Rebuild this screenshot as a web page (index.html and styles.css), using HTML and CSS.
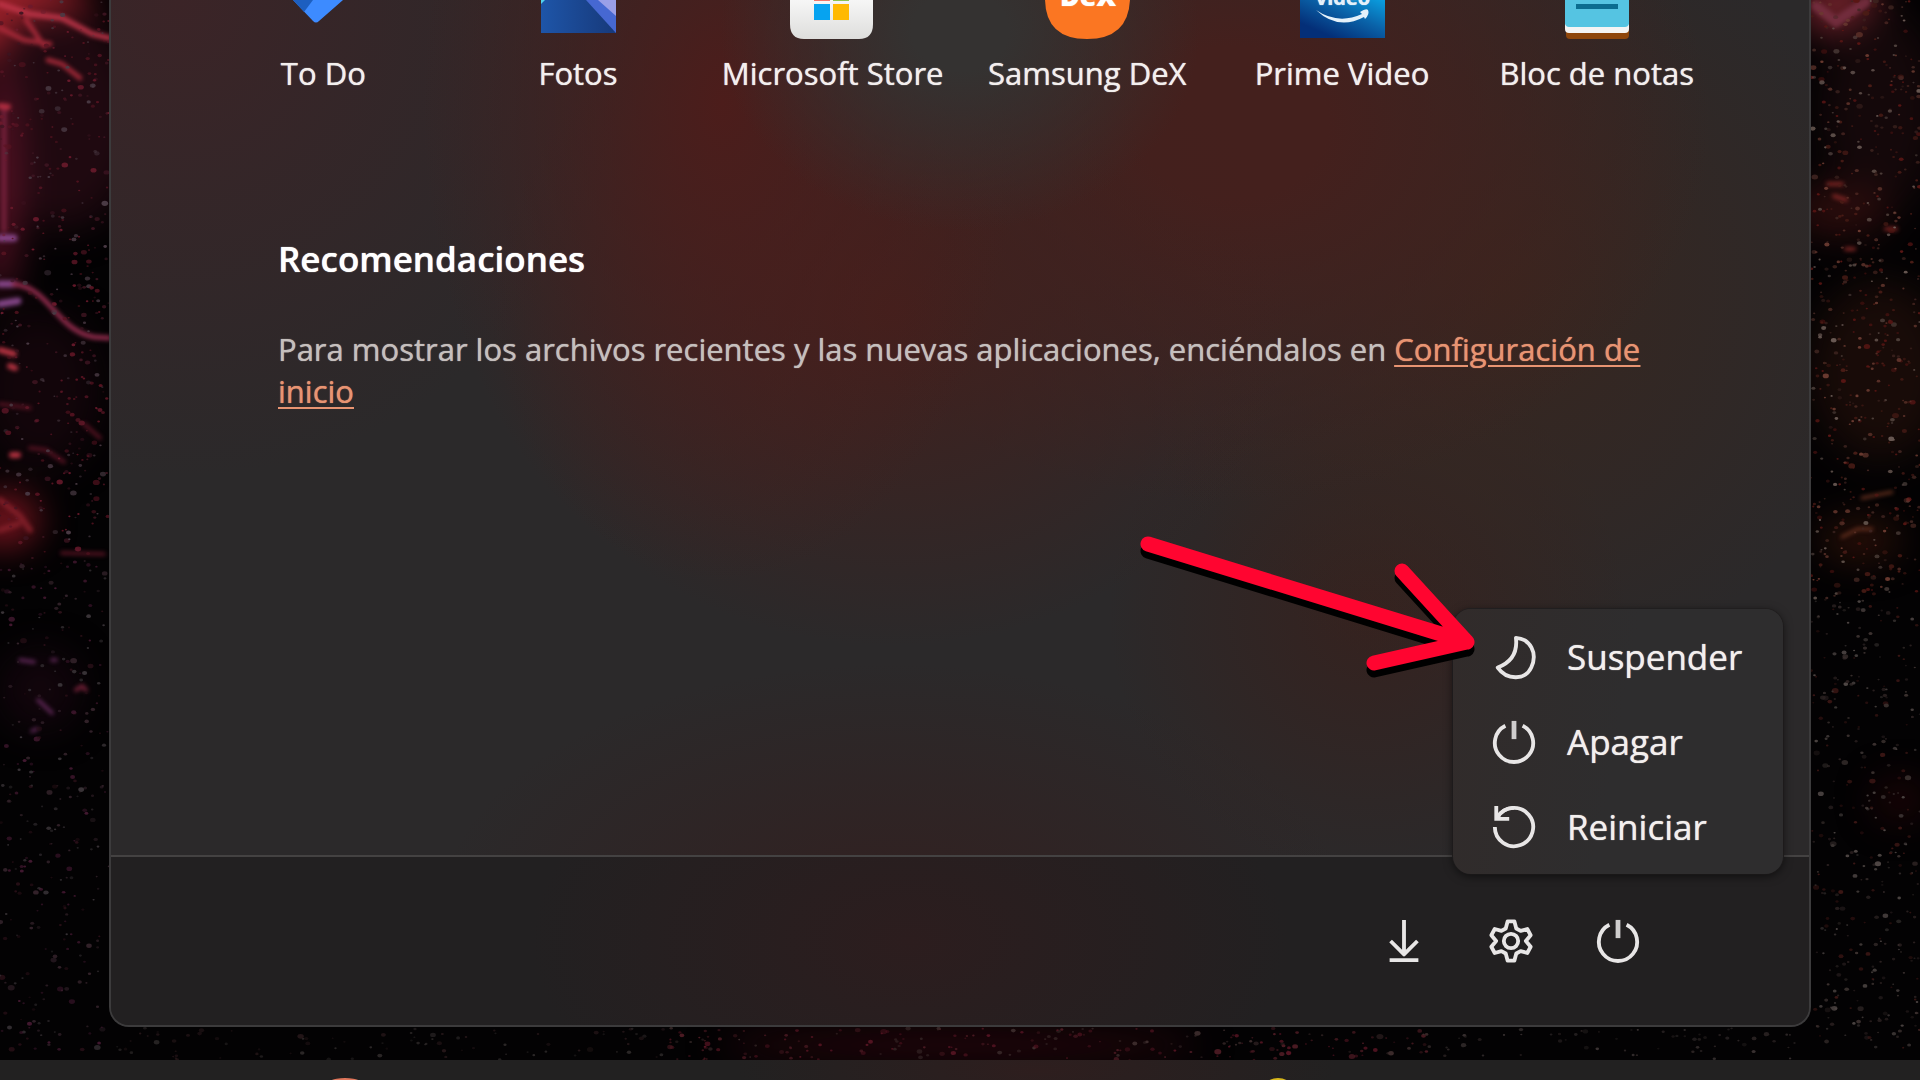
FILE: index.html
```html
<!DOCTYPE html>
<html lang="es">
<head>
<meta charset="utf-8">
<title>Inicio</title>
<link rel="stylesheet" href="styles.css">
</head>
<body>
<svg class="wallpaper" id="wallpaper" viewBox="0 0 1920 1080" preserveAspectRatio="xMidYMid slice" aria-hidden="true">
  <defs>
    <filter id="soft" color-interpolation-filters="sRGB" x="-50%" y="-50%" width="200%" height="200%"><feGaussianBlur stdDeviation="18"/></filter>
    <filter id="fine" color-interpolation-filters="sRGB" x="-50%" y="-50%" width="200%" height="200%"><feGaussianBlur stdDeviation="2"/></filter>
  </defs>
  <rect width="1920" height="1080" fill="#030203"/>
  <g filter="url(#soft)">
    <ellipse cx="10" cy="15" rx="80" ry="50" fill="#9a2029"/>
    <ellipse cx="60" cy="120" rx="80" ry="110" fill="#1f0910"/>
    <ellipse cx="0" cy="180" rx="18" ry="120" fill="#5c1226"/>
    <ellipse cx="40" cy="390" rx="60" ry="80" fill="#12050a"/>
    <ellipse cx="4" cy="520" rx="34" ry="26" fill="#7d1520"/>
    <ellipse cx="40" cy="690" rx="40" ry="40" fill="#12050c"/>
    <ellipse cx="1840" cy="5" rx="40" ry="30" fill="#74232c"/>
    <ellipse cx="1880" cy="110" rx="60" ry="100" fill="#14080a"/>
    <ellipse cx="1840" cy="210" rx="50" ry="26" fill="#2c0d0d"/>
    <ellipse cx="1880" cy="370" rx="70" ry="90" fill="#180b08"/>
    <ellipse cx="1860" cy="540" rx="40" ry="20" fill="#2a1008"/>
    <ellipse cx="1900" cy="800" rx="26" ry="20" fill="#1c0406"/>
    <ellipse cx="960" cy="1045" rx="240" ry="16" fill="#24060b"/>
  </g>
  <g filter="url(#fine)" fill="none" stroke-linecap="round" opacity=".85">
    <path d="M0 4 30 14 62 18 92 34 109 38" stroke="#c2364a" stroke-width="6"/>
    <path d="M0 28 24 40 50 44M48 60 62 64 80 78M26 20 44 46" stroke="#b02c3c" stroke-width="5"/>
    <path d="M4 106V230" stroke="#7c2440" stroke-width="5"/>
    <path d="M0 106 8 107" stroke="#c83448" stroke-width="6"/>
    <path d="M0 238H14M0 284H14M0 304 18 301" stroke="#96509c" stroke-width="7"/>
    <path d="M14 284C50 288 56 330 94 337L109 338" stroke="#a33156" stroke-width="5"/>
    <path d="M84 424 100 438M0 404 30 408M30 448 46 450 64 462M62 553 104 554" stroke="#5c1424" stroke-width="4"/>
    <path d="M0 350 14 354M10 366 15 368M12 455H18" stroke="#d03a4a" stroke-width="6"/>
    <path d="M0 500 20 516 30 530M0 530 18 524" stroke="#86202a" stroke-width="6"/>
    <path d="M20 660 34 662M52 660H56M38 700 52 713M32 731 37 729" stroke="#642a5c" stroke-width="4"/>
    <path d="M76 690 82 686 86 690" stroke="#80243e" stroke-width="4"/>
    <path d="M1828 184H1842M1834 196 1846 200M1886 229H1896M1846 249H1854" stroke="#8c2a28" stroke-width="4"/>
    <path d="M1842 537 1858 529 1872 529M1862 498 1892 492" stroke="#7a3a24" stroke-width="3"/>
    <path d="M1816 6 1836 22 1866 2" stroke="#783042" stroke-width="10"/>
  </g>
  <g id="dust"></g>
</svg>

<main class="desktop">
  <section class="start" aria-label="Inicio">
    <div class="start__body">
      <ul class="apps">
        <li><a class="app" href="#todo">
          <svg class="app__icon" viewBox="0 0 96 39" aria-hidden="true">
            <path d="M18 0H68L44 21Q41 24 38 21L18 0Z" fill="#3d8bff"/>
            <path d="M18 0H36L29 8 20 0Z" fill="#1959b8"/><path d="M18 0 29 12 38 0Z" fill="#1d5fc0"/>
          </svg><span>To Do</span></a></li>
        <li><a class="app" href="#fotos">
          <svg class="app__icon" viewBox="0 0 96 39" aria-hidden="true">
            <defs><linearGradient id="photo" x2="1"><stop stop-color="#1e55a8"/><stop offset="1" stop-color="#17397a"/></linearGradient></defs>
            <path d="M11 0H86V33H11Z" fill="url(#photo)"/>
            <path d="M56 0H86V33Z" fill="#4668d2"/><path d="M68 0H86V16Z" fill="#9a9fe8"/><path d="M11 0H15L11 4Z" fill="#52d3ee"/>
          </svg><span>Fotos</span></a></li>
        <li><a class="app" href="#store">
          <svg class="app__icon" viewBox="0 0 96 39" aria-hidden="true">
            <defs><linearGradient id="bag" x2="0" y2="1"><stop stop-color="#f6f6f6"/><stop offset="1" stop-color="#dededc"/></linearGradient></defs>
            <path d="M5 0H88V24Q88 39 74 39H19Q5 39 5 24Z" fill="url(#bag)"/>
            <path d="M29 0H45V1H29Z" fill="#f0756a"/><path d="M48 0H64V1H48Z" fill="#8cc152"/>
            <path d="M29 4H45V20H29Z" fill="#06a3f0"/><path d="M48 4H64V20H48Z" fill="#ffb902"/>
          </svg><span>Microsoft Store</span></a></li>
        <li><a class="app" href="#dex">
          <svg class="app__icon" viewBox="0 0 96 39" aria-hidden="true">
            <path d="M6 0H91Q89 39 48 39T6 0Z" fill="#fb7622"/>
            <text x="49" y="6" text-anchor="middle" class="logo-dex">DeX</text>
          </svg><span>Samsung DeX</span></a></li>
        <li><a class="app" href="#prime">
          <svg class="app__icon" viewBox="0 0 96 39" aria-hidden="true">
            <defs><linearGradient id="prime" x1="0" y1="1" x2="1" y2="0"><stop offset=".2" stop-color="#042f78"/><stop offset=".6" stop-color="#0a62a8"/><stop offset="1" stop-color="#0a9fe0"/></linearGradient></defs>
            <path d="M6 0H91V38H6Z" fill="url(#prime)"/>
            <text x="49" y="5" text-anchor="middle" class="logo-video">video</text>
            <path d="M22 10Q44 25 68 14L66 12Q72 8 74 10 76 14 71 19L70 17Q44 31 22 10Z" fill="#e4f1fa"/>
          </svg><span>Prime Video</span></a></li>
        <li><a class="app" href="#notas">
          <svg class="app__icon" viewBox="0 0 96 39" aria-hidden="true">
            <path d="M17 28H80V35Q80 39 76 39H21Q17 39 17 35Z" fill="#8e460c"/>
            <path d="M16 22H80V29Q80 33 76 33H20Q16 33 16 29Z" fill="#f4f4f4"/>
            <path d="M16 0H80V24Q79 27 76 27H20Q17 27 16 24Z" fill="#55c4e2"/>
            <path d="M27 4H69V9H27Z" fill="#0b6d90"/>
          </svg><span>Bloc de notas</span></a></li>
      </ul>
      <div class="recommended">
        <h2>Recomendaciones</h2>
        <p>Para mostrar los archivos recientes y las nuevas aplicaciones, enciéndalos en <a href="#configuracion">Configuración de inicio</a></p>
      </div>
    </div>

    <footer class="actions">
      <button type="button" aria-label="Descargas">
        <svg viewBox="0 0 48 48"><path d="M24 2V38M10 24 24 38 38 24M9 44H39" stroke-linejoin="round"/></svg>
      </button>
      <button type="button" aria-label="Configuración">
        <svg viewBox="0 0 48 48"><path d="M20.500 3.500H27.500L29.500 11 34 13.500 41 11.500 44.500 18 39.500 24 44.500 30 41 36.500 34 34.500 29.500 37 27.500 44.500H20.500L18.500 37 14 34.500 7 36.500 3.500 30 8.500 24 3.500 18 7 11.500 14 13.500 18.500 11Z" stroke-linejoin="round"/><circle cx="24" cy="24" r="7.500"/></svg>
      </button>
      <button type="button" aria-label="Inicio/Apagado">
        <svg viewBox="0 0 48 48"><path d="M15 7A20 20 0 1 0 33 7"/><path d="M24 2V21" class="bar"/></svg>
      </button>
    </footer>

    <div class="power-menu" role="menu">
      <button type="button" role="menuitem">
        <svg viewBox="0 0 48 48"><path d="M26 4C28 20 20 30 7 35 17 49 36 48 42 35 49 20 41 5 26 4Z" stroke-linejoin="round"/></svg>Suspender
      </button>
      <button type="button" role="menuitem">
        <svg viewBox="0 0 48 48"><path d="M15 7A20 20 0 1 0 33 7"/><path d="M24 2V21" class="bar"/></svg>Apagar
      </button>
      <button type="button" role="menuitem">
        <svg viewBox="0 0 48 48"><path d="M4 24A20 20 0 1 0 6.700 14"/><path d="M6.700 14A20 20 0 0 1 24 4"/><path d="M5.500 2V15.500H19"/></svg>Reiniciar
      </button>
    </div>

    <svg class="pointer" viewBox="0 0 340 150" aria-hidden="true">
      <g stroke="#000"><path d="M8 21 327 119M262 48 327 119 234 140"/></g>
      <g stroke="#ff0530"><path d="M8 14 327 112M262 41 327 112 234 133"/></g>
    </svg>
  </section>
</main>

<nav class="taskbar" aria-label="Barra de tareas">
  <svg viewBox="0 0 1920 20" preserveAspectRatio="none" aria-hidden="true">
    <ellipse cx="345" cy="28" rx="22" ry="10" fill="#e0775c"/>
    <ellipse cx="1278" cy="28" rx="14" ry="10" fill="#d8b81c"/>
  </svg>
</nav>
<script src="wallpaper.js"></script>
</body>
</html>
```
FILE: styles.css
```css
* { box-sizing: border-box; }

body {
  margin: 0;
  min-height: 100vh;
  display: flex;
  flex-direction: column;
  overflow: hidden;
  background: #030203;
  color: #f3efee;
  font-family: "Open Sans", "Noto Sans", sans-serif;
  font-size: 31px;
  line-height: 42px;
  text-shadow: 0 0 1px currentColor;
}

.wallpaper {
  position: absolute;
  inset: 0;
  width: 100%;
  height: 100%;
}

.desktop {
  position: relative;
  flex: 1;
  display: flex;
  padding: 0 109px 33px;
}

.start {
  position: relative;
  flex: 1;
  display: flex;
  flex-direction: column;
  border: 2px solid #3c3b3c;
  border-top: 0;
  border-radius: 0 0 20px 20px;
  overflow: hidden;
  background:
    radial-gradient(ellipse 240px 200px at 50% 3%, #343231 20%, transparent),
    radial-gradient(ellipse 300px 480px at 36% 10%, #4c1d1b, transparent),
    radial-gradient(ellipse 400px 340px at 46% 30%, #42201d, transparent),
    radial-gradient(ellipse 480px 380px at 66% 12%, #44201d 20%, transparent),
    radial-gradient(ellipse 380px 400px at 82% 28%, #38261f, transparent),
    radial-gradient(ellipse 460px 480px at 4% 0%, #3b2427, transparent),
    radial-gradient(ellipse 260px 260px at 74% 60%, #35221f, transparent),
    radial-gradient(ellipse 460px 260px at 46% 90%, #322020, transparent),
    #2b292a;
}

.start__body { flex: 1; }

.apps {
  display: grid;
  grid-template-columns: repeat(6, 1fr);
  margin: 0;
  padding: 0 85px;
  list-style: none;
}

.app {
  display: flex;
  flex-direction: column;
  align-items: center;
  gap: 13px;
  color: inherit;
  text-decoration: none;
  white-space: nowrap;
}

.app__icon {
  width: 96px;
  height: 39px;
}

.logo-dex {
  fill: #fff;
  font: 800 27px "Open Sans", sans-serif;
}

.logo-video {
  fill: #e4f1fa;
  font: 700 20px "Open Sans", sans-serif;
}

.recommended { padding: 144px 160px 0 167px; }

.recommended h2 {
  margin: 0 0 48px;
  font-size: 35px;
  font-weight: 600;
  line-height: 42px;
  color: #fff;
}

.recommended p {
  margin: 0;
  color: #c5bfbd;
}

.recommended a {
  color: #e89472;
  text-decoration-thickness: 2px;
  text-underline-offset: 4px;
}

.actions {
  display: flex;
  justify-content: flex-end;
  align-items: center;
  gap: 50px;
  height: 170px;
  padding-right: 163px;
  border-top: 2px solid #444242;
  background:
    radial-gradient(ellipse 380px 220px at 47% 50%, #2c1d1e, transparent),
    #222021;
}

button {
  border: 0;
  background: none;
  color: inherit;
  font: inherit;
  text-shadow: inherit;
}

button svg {
  flex: none;
  width: 46px;
  height: 46px;
  fill: none;
  stroke: #e8e6e6;
  stroke-width: 4px;
}

button .bar { stroke-width: 5px; stroke: #cfcdcd; }

.actions button {
  display: flex;
  justify-content: center;
  width: 57px;
  padding: 0;
}

.power-menu {
  position: absolute;
  right: 26px;
  bottom: 151px;
  width: 330px;
  padding: 5px 0;
  border-radius: 18px;
  background: linear-gradient(100deg, #312b2a, #2e2d2e 50%);
  box-shadow: 0 2px 10px #0009, 0 0 0 1px #282526;
}

.power-menu button {
  display: flex;
  align-items: center;
  gap: 30px;
  width: 100%;
  height: 85px;
  padding: 0 0 0 38px;
  font-size: 35px;
  text-align: left;
}

.pointer {
  position: absolute;
  right: 329px;
  bottom: 345px;
  width: 340px;
  height: 150px;
  fill: none;
  stroke-width: 15px;
  stroke-linecap: round;
  stroke-linejoin: round;
}

.taskbar {
  position: relative;
  height: 20px;
  background: radial-gradient(ellipse 300px 60px at 54% 50%, #2e1e1e, #222121);
}

.taskbar svg {
  display: block;
  width: 100%;
  height: 20px;
}
```
FILE: wallpaper.js
```js
// Scatters fine dust over the wallpaper from a fixed seed.
(function () {
  var seed = 7;
  function rnd() {
    seed = (seed * 16807) % 2147483647;
    return seed / 2147483647;
  }
  var zones = [
    { x: 0, y: 0, w: 109, h: 560, n: 420, colors: ["#6b1a2c", "#4a3a44", "#3c1420", "#5a1422"] },
    { x: 0, y: 560, w: 109, h: 490, n: 300, colors: ["#33222a", "#3a3438", "#2a1018", "#421830"] },
    { x: 1811, y: 0, w: 109, h: 600, n: 640, colors: ["#6a3a30", "#6a5a54", "#4a1c16", "#3e2420", "#5a1614"] },
    { x: 1811, y: 600, w: 109, h: 450, n: 360, colors: ["#3c3230", "#4e4644", "#3a1614", "#2a2020"] },
    { x: 109, y: 1028, w: 560, h: 32, n: 90, colors: ["#241618", "#2c2828"] },
    { x: 669, y: 1028, w: 760, h: 32, n: 220, colors: ["#4a1a22", "#3c2c2c", "#541422"] },
    { x: 1429, y: 1028, w: 382, h: 32, n: 60, colors: ["#2c2424", "#3c3434"] }
  ];
  var out = "";
  zones.forEach(function (z) {
    for (var i = 0; i < z.n; i++) {
      var x = z.x + rnd() * z.w, y = z.y + rnd() * z.h;
      var r = 0.8 + rnd() * rnd() * 2;
      var c = z.colors[Math.floor(rnd() * z.colors.length)];
      out += '<ellipse cx="' + x.toFixed(1) + '" cy="' + y.toFixed(1) + '" rx="' + (r * 1.3).toFixed(1) +
        '" ry="' + r.toFixed(1) + '" fill="' + c + '" opacity="' + (0.4 + rnd() * 0.6).toFixed(2) + '"/>';
    }
  });
  document.getElementById("dust").innerHTML = out;
})();
```
